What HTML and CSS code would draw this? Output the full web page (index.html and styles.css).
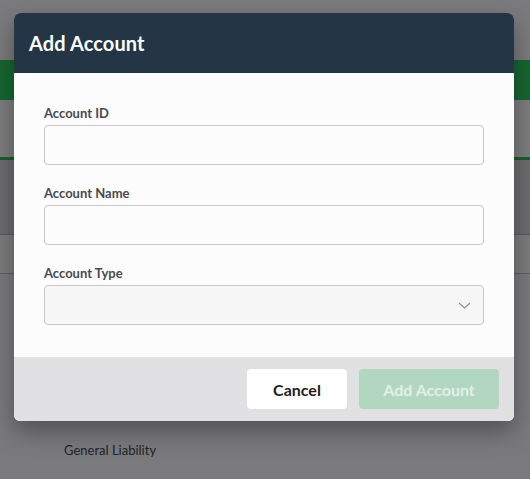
FILE: index.html
```html
<!DOCTYPE html>
<html>
<head>
<meta charset="utf-8">
<link rel="stylesheet" href="styles.css">
</head>
<body>
<div class="page">
  <div class="page-top"></div>
  <div class="page-bar"></div>
  <div class="page-tabs"></div>
  <div class="page-band"></div>
  <div class="page-row"></div>
  <div class="page-row tall"></div>
  <div class="page-row last"><span class="row-text">General Liability</span></div>
</div>

<div class="modal">
  <div class="modal-header"><h1 class="modal-title">Add Account</h1></div>
  <div class="modal-body">
    <div class="field">
      <label class="field-label">Account ID</label>
      <input class="field-input" type="text">
    </div>
    <div class="field">
      <label class="field-label">Account Name</label>
      <input class="field-input" type="text">
    </div>
    <div class="field">
      <label class="field-label">Account Type</label>
      <div class="field-select">
        <svg class="chevron" width="13" height="7" viewBox="0 0 13 7"><path d="M1 1 L6.5 6 L12 1" fill="none" stroke="#8d8c90" stroke-width="1.1"/></svg>
      </div>
    </div>
  </div>
  <div class="modal-footer">
    <button class="btn btn-cancel">Cancel</button>
    <button class="btn btn-primary">Add Account</button>
  </div>
</div>
</body>
</html>
```
FILE: styles.css
```css
* { box-sizing: border-box; }
html, body { margin: 0; padding: 0; }
body {
  width: 530px;
  height: 479px;
  overflow: hidden;
  background: #7a797c;
  font-family: Lato, "Liberation Sans", sans-serif;
  position: relative;
}
.page { display: flex; flex-direction: column; }
.page-top { height: 60px; background: #7b7a7c; }
.page-bar { height: 40px; background: #176630; }
.page-tabs { height: 60px; background: #7d7c7f; border-bottom: 3px solid #16602d; }
.page-band { height: 75px; background: #6c6b6e; border-bottom: 1px solid #59585b; }
.page-row { height: 39px; background: #7c7b7e; border-bottom: 1px solid #5f5e61; }
.page-row.tall { height: 150px; border-bottom: none; background: #7a797c; }
.page-row.last { height: 60px; border: none; background: #7a797c; }
.row-text {
  position: absolute;
  left: 64px;
  top: 442px;
  font-size: 13px;
  color: #232224;
}

.modal {
  position: absolute;
  left: 14px;
  top: 13px;
  width: 500px;
  border-radius: 6px;
  overflow: hidden;
  background: #fdfcfd;
  box-shadow: 0 10px 24px rgba(0,0,0,0.35);
  display: flex;
  flex-direction: column;
}
.modal-header {
  height: 60px;
  background: #243645;
  display: flex;
  align-items: center;
  padding: 0 15px;
}
.modal-title {
  margin: 0;
  color: #ffffff;
  font-size: 20px;
  font-weight: 700;
  letter-spacing: 0.1px;
}
.modal-body {
  padding: 32px 30px 32px;
  display: flex;
  flex-direction: column;
  gap: 20px;
}
.field { display: flex; flex-direction: column; gap: 4px; }
.field-label {
  font-size: 13px;
  line-height: 16px;
  font-weight: 700;
  color: #4a494c;
}
.field-input, .field-select {
  height: 40px;
  width: 440px;
  border: 1px solid #c8c7ca;
  border-radius: 4px;
  background: #fdfcfd;
  margin: 0;
}
.field-select {
  background: #f6f6f7;
  display: flex;
  align-items: center;
  justify-content: flex-end;
  padding-right: 12px;
}
.chevron { display: block; }
.modal-footer {
  height: 64px;
  background: #e1e0e2;
  display: flex;
  justify-content: flex-end;
  align-items: center;
  gap: 12px;
  padding: 0 15px;
}
.btn {
  height: 40px;
  border: none;
  border-radius: 4px;
  font-family: Lato, "Liberation Sans", sans-serif;
  font-size: 16px;
  font-weight: 700;
}
.btn-cancel {
  width: 100px;
  background: #ffffff;
  color: #1d1d1f;
}
.btn-primary {
  width: 140px;
  background: #b2d7c1;
  color: #e2f0e7;
}
```
